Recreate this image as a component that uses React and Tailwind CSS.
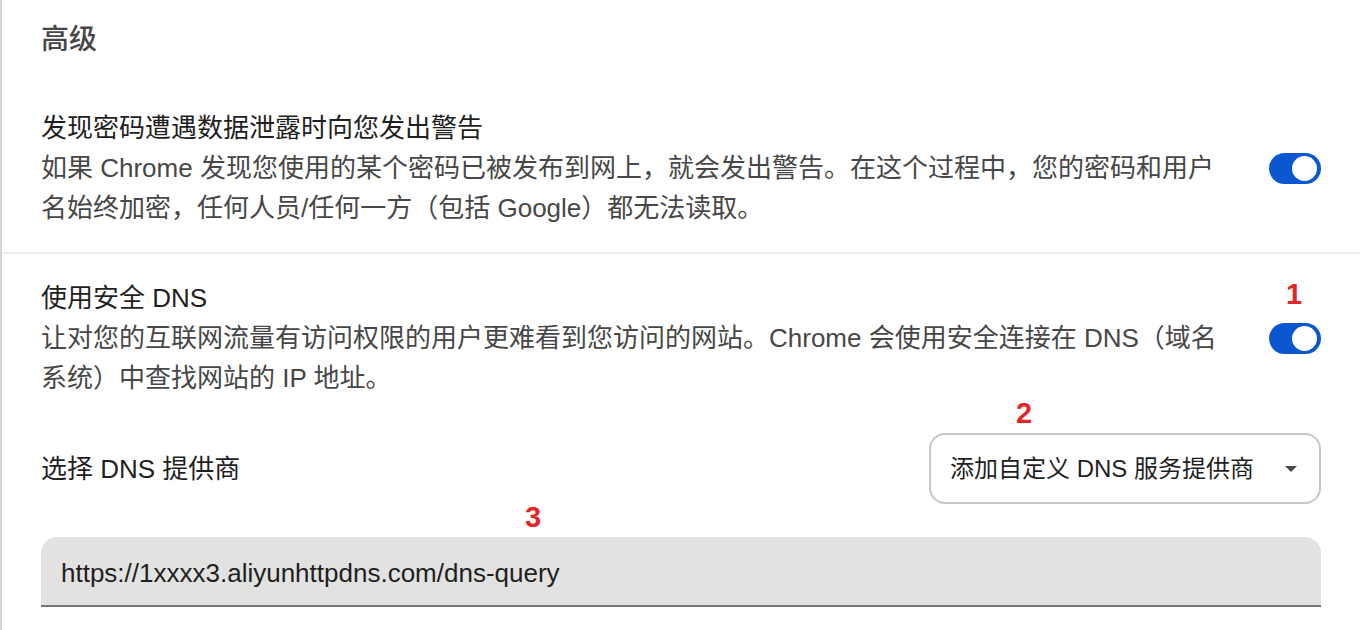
import React from 'react'

const font = { fontFamily: '"Liberation Sans", "Noto Sans CJK SC", sans-serif' }

function Toggle() {
  return (
    <div className="relative h-[31px] w-[52px] shrink-0 rounded-full bg-[#0b57d0]">
      <div className="absolute right-[4px] top-[3px] h-[25px] w-[25px] rounded-full bg-white" />
    </div>
  )
}

function Mark({ n, className }) {
  return (
    <span className={'absolute text-[29px] font-semibold leading-none text-[#e3262a] ' + className}>{n}</span>
  )
}

export default function App() {
  return (
    <div className="relative min-h-[630px] w-[1360px] overflow-hidden border-l-2 border-[#d6d6d6] bg-white" style={font}>
      <div className="px-[39px] pt-[20px]">
        <h2 className="text-[28px] font-medium leading-[40px] text-[#474747]">高级</h2>
      </div>

      {/* password leak */}
      <div className="flex items-center gap-[40px] px-[39px] pt-[48px] pb-[24px]">
        <div className="flex-1 text-[26px] leading-[40px]">
          <div className="text-[#1f1f1f]">发现密码遭遇数据泄露时向您发出警告</div>
          <div className="text-[#474747]">
            如果 Chrome 发现您使用的某个密码已被发布到网上，就会发出警告。在这个过程中，您的密码和用户名始终加密，任何人员/任何一方（包括 Google）都无法读取。
          </div>
        </div>
        <Toggle />
      </div>

      <div className="h-[2px] bg-[#ececec]" />

      {/* secure dns */}
      <div className="flex items-center gap-[40px] px-[39px] pt-[24px]">
        <div className="flex-1 text-[26px] leading-[40px]">
          <div className="text-[#1f1f1f]">使用安全 DNS</div>
          <div className="text-[#474747]">
            让对您的互联网流量有访问权限的用户更难看到您访问的网站。Chrome 会使用安全连接在 DNS（域名系统）中查找网站的 IP 地址。
          </div>
        </div>
        <Toggle />
      </div>

      <div className="flex items-center justify-between px-[39px] pt-[35px]">
        <span className="text-[26px] leading-[40px] text-[#1f1f1f]">选择 DNS 提供商</span>
        <div className="flex h-[71px] w-[392px] items-center justify-between rounded-[16px] border-2 border-[#c4c7c5] pl-[19px] pr-[21px]">
          <span className="text-[24px] text-[#1f1f1f]">添加自定义 DNS 服务提供商</span>
          <svg width="14" height="8" viewBox="0 0 14 8">
            <path d="M1 1h12L7 7z" fill="#474747" />
          </svg>
        </div>
      </div>

      <div className="px-[39px] pt-[33px]">
        <div className="flex h-[70px] items-center rounded-t-[16px] border-b-2 border-[#747775] bg-[#e2e3e1] px-[20px] pt-[4px]">
          <span className="text-[26px] text-[#1f1f1f]">https://1xxxx3.aliyunhttpdns.com/dns-query</span>
        </div>
      </div>

      <Mark n="1" className="left-[1284px] top-[280px]" />
      <Mark n="2" className="left-[1014px] top-[399px]" />
      <Mark n="3" className="left-[523px] top-[503px]" />
    </div>
  )
}
